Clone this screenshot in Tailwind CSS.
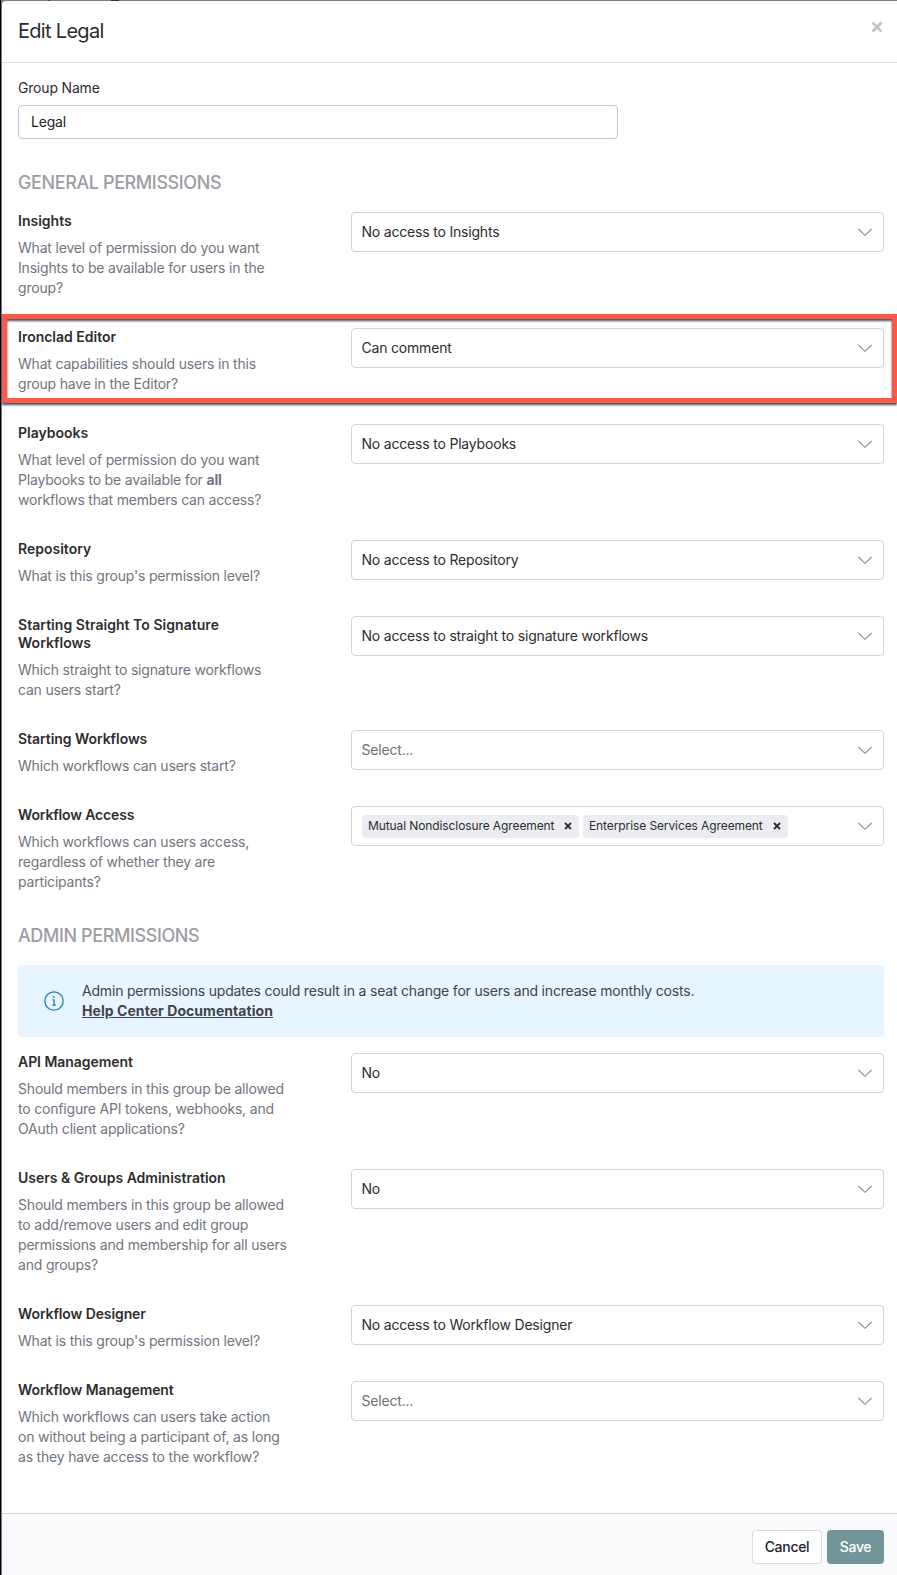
<!DOCTYPE html>
<html lang="en">
<head>
<meta charset="utf-8">
<title>Edit Legal</title>
<script src="https://cdn.jsdelivr.net/npm/@tailwindcss/browser@4"></script>
</head>
<body class="w-[897px] h-[1575px] overflow-hidden bg-[#7b7d84] font-['Inter',sans-serif] text-sm leading-5 tracking-[-0.19px] text-[#2d2d2d]">
<svg class="hidden">
  <symbol id="chev" viewBox="0 0 14 8"><path d="M.4 1 7 7.300 13.600 1" fill="none" stroke="#8e8f96" stroke-width="1.1"/></symbol>
  <symbol id="x" viewBox="0 0 8 8"><path d="M1 1l6 6M7 1L1 7" fill="none" stroke="currentColor" stroke-width="1.8"/></symbol>
</svg>
<div class="relative h-full border-l border-black pl-px pt-px">
  <div class="absolute left-[47px] top-0 h-px w-0.5 bg-[#45464d]"></div>
  <div class="absolute left-[110px] top-0 h-px w-2 bg-[#33343a]"></div>
  <div class="flex h-full flex-col rounded-tl-[4px] bg-white">
    <header class="flex h-[62px] shrink-0 justify-between border-b border-[#e0e1e4] pl-4 pr-[14px]">
      <h1 class="pt-4 text-xl leading-7 tracking-[-0.7px]">Edit Legal</h1>
      <svg class="mt-5 h-[12px] w-[12px] text-[#c4c4c4]"><use href="#x"/></svg>
    </header>
    <main class="grow pl-4 pr-[13px]">
      <label class="mt-[15px] block leading-5">Group Name</label>
      <div class="mt-[7px] flex h-[34px] w-[600px] items-center rounded border border-[#c6c7ca] px-3 text-[#1c212b]">Legal</div>
      <h2 class="mt-[32px] h-[41px] text-lg leading-6 font-medium tracking-[-0.4px] text-[#9d9da4]">GENERAL PERMISSIONS</h2>

      <section class="flex flex-col gap-[30px]">
        <div class="flex justify-between">
          <div><h3 class="font-semibold leading-[18px] tracking-normal">Insights</h3><p class="mt-2 text-[#717580]">What level of permission do you want<br>Insights to be available for users in the<br>group?</p></div>
          <div class="flex h-10 w-[533px] items-center justify-between rounded border border-[#d3d4db] pl-[9.5px] pr-[11px]"><span>No access to Insights</span><svg class="h-2 w-[14px]"><use href="#chev"/></svg></div>
        </div>
        <div class="flex justify-between">
          <div><h3 class="font-semibold leading-[18px] tracking-normal">Ironclad Editor</h3><p class="mt-2 text-[#717580]">What capabilities should users in this<br>group have in the Editor?</p></div>
          <div class="flex h-10 w-[533px] items-center justify-between rounded border border-[#d3d4db] pl-[9.5px] pr-[11px]"><span>Can comment</span><svg class="h-2 w-[14px]"><use href="#chev"/></svg></div>
        </div>
        <div class="flex justify-between">
          <div><h3 class="font-semibold leading-[18px] tracking-normal">Playbooks</h3><p class="mt-2 text-[#717580]">What level of permission do you want<br>Playbooks to be available for <b>all</b><br>workflows that members can access?</p></div>
          <div class="flex h-10 w-[533px] items-center justify-between rounded border border-[#d3d4db] pl-[9.5px] pr-[11px]"><span>No access to Playbooks</span><svg class="h-2 w-[14px]"><use href="#chev"/></svg></div>
        </div>
        <div class="flex justify-between">
          <div><h3 class="font-semibold leading-[18px] tracking-normal">Repository</h3><p class="mt-2 text-[#717580]">What is this group's permission level?</p></div>
          <div class="flex h-10 w-[533px] items-center justify-between rounded border border-[#d3d4db] pl-[9.5px] pr-[11px]"><span>No access to Repository</span><svg class="h-2 w-[14px]"><use href="#chev"/></svg></div>
        </div>
        <div class="flex justify-between">
          <div><h3 class="font-semibold leading-[18px] tracking-[0.04px]">Starting Straight To Signature<br>Workflows</h3><p class="mt-2 text-[#717580]">Which straight to signature workflows<br>can users start?</p></div>
          <div class="flex h-10 w-[533px] items-center justify-between rounded border border-[#d3d4db] pl-[9.5px] pr-[11px]"><span>No access to straight to signature workflows</span><svg class="h-2 w-[14px]"><use href="#chev"/></svg></div>
        </div>
        <div class="flex justify-between">
          <div><h3 class="font-semibold leading-[18px] tracking-[-0.05px]">Starting Workflows</h3><p class="mt-2 text-[#717580]">Which workflows can users start?</p></div>
          <div class="flex h-10 w-[533px] items-center justify-between rounded border border-[#d3d4db] pl-[9.5px] pr-[11px]"><span class="text-[#707076]">Select...</span><svg class="h-2 w-[14px]"><use href="#chev"/></svg></div>
        </div>
        <div class="flex justify-between">
          <div><h3 class="font-semibold leading-[18px] tracking-[-0.15px]">Workflow Access</h3><p class="mt-2 text-[#717580]">Which workflows can users access,<br>regardless of whether they are<br>participants?</p></div>
          <div class="flex h-10 w-[533px] items-center justify-between rounded border border-[#d3d4db] pl-[10px] pr-[11px]">
            <div class="flex gap-1 text-xs tracking-[-0.1px]">
              <span class="flex h-[23px] w-[217px] items-center justify-between rounded-sm bg-[#ecedf2] pl-1.5 pr-[7px]">Mutual Nondisclosure Agreement<svg class="h-2 w-2"><use href="#x"/></svg></span>
              <span class="flex h-[23px] w-[205px] items-center justify-between rounded-sm bg-[#ecedf2] pl-1.5 pr-[7px]">Enterprise Services Agreement<svg class="h-2 w-2"><use href="#x"/></svg></span>
            </div>
            <svg class="h-2 w-[14px]"><use href="#chev"/></svg>
          </div>
        </div>
      </section>

      <h2 class="mt-[32px] text-lg leading-6 font-medium tracking-[-0.4px] text-[#9d9da4]">ADMIN PERMISSIONS</h2>
      <div class="mt-[17px] mb-4 flex h-[72px] items-center rounded bg-[#e6f5ff] pl-[26px] text-[#41444c]">
        <svg class="mr-[18px] h-5 w-5" viewBox="0 0 20 20" fill="none" stroke="#2780bd" stroke-width="1.3"><circle cx="10" cy="10" r="9.200"/><path d="M8.300 8.800H10.100V14M8.200 14.100H12"/><circle cx="9.800" cy="6" r=".9" fill="#2780bd" stroke="none"/></svg>
        <p>Admin permissions updates could result in a seat change for users and increase monthly costs.<br><a class="font-bold tracking-[0.06px] underline">Help Center Documentation</a></p>
      </div>

      <section class="flex flex-col gap-[30px]">
        <div class="flex justify-between">
          <div><h3 class="font-semibold leading-[18px] tracking-[-0.05px]">API Management</h3><p class="mt-2 text-[#717580]">Should members in this group be allowed<br>to configure API tokens, webhooks, and<br>OAuth client applications?</p></div>
          <div class="flex h-10 w-[533px] items-center justify-between rounded border border-[#d3d4db] pl-[9.5px] pr-[11px]"><span>No</span><svg class="h-2 w-[14px]"><use href="#chev"/></svg></div>
        </div>
        <div class="flex justify-between">
          <div><h3 class="font-semibold leading-[18px] tracking-normal">Users &amp; Groups Administration</h3><p class="mt-2 text-[#717580]">Should members in this group be allowed<br>to add/remove users and edit group<br>permissions and membership for all users<br>and groups?</p></div>
          <div class="flex h-10 w-[533px] items-center justify-between rounded border border-[#d3d4db] pl-[9.5px] pr-[11px]"><span>No</span><svg class="h-2 w-[14px]"><use href="#chev"/></svg></div>
        </div>
        <div class="flex justify-between">
          <div><h3 class="font-semibold leading-[18px] tracking-[-0.1px]">Workflow Designer</h3><p class="mt-2 text-[#717580]">What is this group's permission level?</p></div>
          <div class="flex h-10 w-[533px] items-center justify-between rounded border border-[#d3d4db] pl-[9.5px] pr-[11px]"><span>No access to Workflow Designer</span><svg class="h-2 w-[14px]"><use href="#chev"/></svg></div>
        </div>
        <div class="flex justify-between">
          <div><h3 class="font-semibold leading-[18px] tracking-[-0.1px]">Workflow Management</h3><p class="mt-2 text-[#717580]">Which workflows can users take action<br>on without being a participant of, as long<br>as they have access to the workflow?</p></div>
          <div class="flex h-10 w-[533px] items-center justify-between rounded border border-[#d3d4db] pl-[9.5px] pr-[11px]"><span class="text-[#707076]">Select...</span><svg class="h-2 w-[14px]"><use href="#chev"/></svg></div>
        </div>
      </section>
    </main>
    <footer class="flex h-[62px] shrink-0 items-start justify-end gap-[5px] border-t border-[#d3d5d9] bg-[#f9fafc] pt-4 pr-[13px] font-medium">
      <button class="h-[34px] w-[70px] rounded border border-[#d9dbdf] bg-white font-medium tracking-[-0.3px] text-[#1c212b]">Cancel</button>
      <button class="h-[34px] w-[57px] rounded bg-[#739599] font-medium tracking-[-0.3px] text-white">Save</button>
    </footer>
  </div>
  <!-- highlight around the Ironclad Editor row -->
  <div class="absolute left-px right-0 top-[314px] h-[89px] border-[5px] border-[#ff584a] drop-shadow-[0_2px_1px_rgba(0,0,0,0.7)]"></div>
</div>
</body>
</html>
